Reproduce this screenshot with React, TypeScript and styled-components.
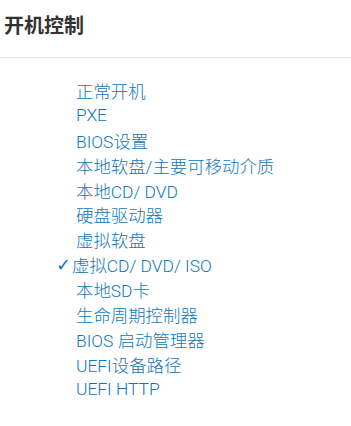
import React from "react";
import styled, { createGlobalStyle } from "styled-components";

const Global = createGlobalStyle`
  html, body { margin: 0; padding: 0; background: #fff; }
  body { font-family: Roboto, "Noto Sans CJK SC", sans-serif; }
`;

const Page = styled.div`
  width: 351px;
  height: 426px;
  background: #fff;
`;

const Header = styled.div`
  height: 58px;
  border-bottom: 1px solid #e4e4e4;
  padding: 13px 0 0 4px;
  box-sizing: border-box;
`;

const Title = styled.h2`
  margin: 0;
  font-size: 20px;
  line-height: 24px;
  font-weight: 700;
  color: #333;
  font-family: "Noto Sans CJK SC", sans-serif;
`;

const List = styled.ul`
  list-style: none;
  margin: 0;
  padding: 20px 0 0 76px;
`;

const Item = styled.li<{ $checked?: boolean }>`
  display: flex;
  align-items: center;
  height: 24.9px;
  font-size: 17.4px;
  font-weight: 300;
  color: #0f76bd;
  white-space: nowrap;
  margin-left: ${(p) => (p.$checked ? "-20px" : "0")};
`;

const Check = styled.span`
  width: 16px;
  font-size: 18px;
  font-weight: 700;
  color: #0f76bd;
  font-family: "DejaVu Sans", sans-serif;
`;

const items = [
  "正常开机",
  "PXE",
  "BIOS设置",
  "本地软盘/主要可移动介质",
  "本地CD/ DVD",
  "硬盘驱动器",
  "虚拟软盘",
  "虚拟CD/ DVD/ ISO",
  "本地SD卡",
  "生命周期控制器",
  "BIOS 启动管理器",
  "UEFI设备路径",
  "UEFI HTTP",
];

export default function App() {
  return (
    <Page>
      <Global />
      <Header>
        <Title>开机控制</Title>
      </Header>
      <List>
        {items.map((t, i) => {
          const checked = i === 7;
          return (
            <Item key={t} $checked={checked}>
              {checked && <Check>✓</Check>}
              {t}
            </Item>
          );
        })}
      </List>
    </Page>
  );
}
